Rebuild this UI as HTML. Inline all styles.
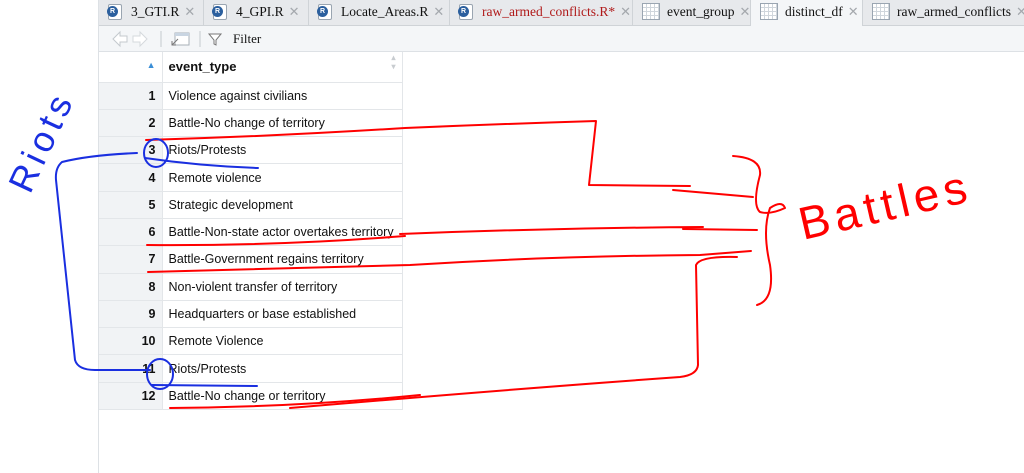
<!DOCTYPE html>
<html><head><meta charset="utf-8"><style>
*{margin:0;padding:0;box-sizing:border-box}
body{width:1024px;height:473px;overflow:hidden;background:#fff;position:relative;font-family:"Liberation Sans",sans-serif}
.pane{position:absolute;left:98px;top:0;width:926px;height:473px;background:#fff;border-left:1px solid #dde1e5}
.tabs{position:absolute;left:0;top:0;width:926px;height:26px;background:#e7e9ec;border-bottom:1px solid #cfd3d7}
.tab{position:absolute;top:0;height:25px;border-right:1px solid #cfd3d7;font-family:"Liberation Serif",serif;font-size:13.5px;line-height:24px;color:#111;white-space:nowrap;overflow:hidden}
.tab .ic{position:absolute;left:9px;top:4px;width:14px;height:16px;background:#fff;border:1px solid #9aa5b1;border-radius:2px}
.tab .r{position:absolute;left:-2px;top:1px;width:11px;height:11px;border-radius:50%;background:#2b5f9e;color:#fff;font-size:7px;line-height:11px;text-align:center;font-family:"Liberation Sans";font-weight:bold}
.tab .g{position:absolute;left:9px;top:3px;width:18px;height:17px;border:1px solid #9aa5b1;background:repeating-linear-gradient(0deg,#fff 0 3px,#d0d6dc 3px 4px),#fff}
.tab .g:after{content:"";position:absolute;inset:0;background:repeating-linear-gradient(90deg,transparent 0 3px,#d0d6dc 3px 4px)}
.tab .x{color:#a4a8ad;font-family:"Liberation Sans";font-size:13px;margin-left:5px}
.tb{position:absolute;left:0;top:26px;width:926px;height:26px;background:#f4f6f8;border-bottom:1px solid #dde1e5}
table{position:absolute;left:0;top:52px;border-collapse:collapse;font-size:12.5px;color:#111}
td{height:27.3px;border-bottom:1px solid #e3e6e9;border-right:1px solid #e3e6e9;padding:0 6px}
td.n{width:63px;text-align:right;font-weight:bold;background:#f1f3f5;padding-right:6px}
td.v{width:240px}
tr.h td{height:30px;font-weight:bold;font-size:13px;background:#fff}
tr.h td.n{background:#fff}
</style></head><body>
<div class="pane">
<div class="tabs">
 <div class="tab" style="left:0;width:105px;padding-left:32px"><span class="ic"><span class="r">R</span></span>3_GTI.R<span class="x">✕</span></div>
 <div class="tab" style="left:105px;width:105px;padding-left:32px"><span class="ic"><span class="r">R</span></span>4_GPI.R<span class="x">✕</span></div>
 <div class="tab" style="left:210px;width:141px;padding-left:32px"><span class="ic"><span class="r">R</span></span>Locate_Areas.R<span class="x">✕</span></div>
 <div class="tab" style="left:351px;width:183px;padding-left:32px;color:#b01a1a"><span class="ic"><span class="r">R</span></span>raw_armed_conflicts.R*<span class="x">✕</span></div>
 <div class="tab" style="left:534px;width:118px;padding-left:34px"><span class="g"></span>event_group<span class="x">✕</span></div>
 <div class="tab" style="left:652px;width:112px;padding-left:34px;background:#f4f6f8;height:26px"><span class="g"></span>distinct_df<span class="x">✕</span></div>
 <div class="tab" style="left:764px;width:162px;padding-left:34px;border-right:none"><span class="g"></span>raw_armed_conflicts<span class="x">✕</span></div>
</div>
<div class="tb">
 <svg width="300" height="26" style="position:absolute;left:0;top:0">
  <path d="M14 13 l7-7 v4 h7 v6 h-7 v4z" fill="#fff" stroke="#c4c9ce"/>
  <path d="M48 13 l-7-7 v4 h-7 v6 h7 v4z" fill="#fff" stroke="#d5d9dd"/>
  <line x1="62" y1="5" x2="62" y2="21" stroke="#c4c9ce"/>
  <rect x="76" y="7" width="14" height="12" fill="#fff" stroke="#a9b0b7"/><rect x="76" y="7" width="14" height="3" fill="#c9d5e2"/>
  <path d="M73 19 l6-6 M73 15 v4 h4" stroke="#777" fill="none"/>
  <line x1="101" y1="5" x2="101" y2="21" stroke="#c4c9ce"/>
  <path d="M110 8 h12 l-5 6 v5 l-2 -1 v-4z" fill="#fff" stroke="#777"/>
  <text x="134" y="17" font-family="Liberation Serif" font-size="13" fill="#111">Filter</text>
 </svg>
</div>
<table>
<tr class="h"><td class="n" style="vertical-align:top;padding-top:4px"><span style="color:#3a8ed6;font-size:9px">▲</span></td><td class="v">event_type<span style="float:right;color:#c8ccd0;font-size:8px;line-height:9px;margin-top:-6px">▴<br>▾</span></td></tr>
<tr><td class="n">1</td><td class="v">Violence against civilians</td></tr>
<tr><td class="n">2</td><td class="v">Battle-No change of territory</td></tr>
<tr><td class="n">3</td><td class="v">Riots/Protests</td></tr>
<tr><td class="n">4</td><td class="v">Remote violence</td></tr>
<tr><td class="n">5</td><td class="v">Strategic development</td></tr>
<tr><td class="n">6</td><td class="v">Battle-Non-state actor overtakes territory</td></tr>
<tr><td class="n">7</td><td class="v">Battle-Government regains territory</td></tr>
<tr><td class="n">8</td><td class="v">Non-violent transfer of territory</td></tr>
<tr><td class="n">9</td><td class="v">Headquarters or base established</td></tr>
<tr><td class="n">10</td><td class="v">Remote Violence</td></tr>
<tr><td class="n">11</td><td class="v">Riots/Protests</td></tr>
<tr><td class="n">12</td><td class="v">Battle-No change or territory</td></tr>
</table>
</div>
<svg width="1024" height="473" style="position:absolute;left:0;top:0" fill="none" stroke-linecap="round" stroke-linejoin="round">
 <g stroke="#f00" stroke-width="2">
  <path d="M146 140 Q280 136 405 128 Q500 124 596 121 L589 185 L690 186"/>
  <path d="M673 190 L753 197"/>
  <path d="M733 156 Q762 158 760 175 Q752 205 760 212 Q770 215 785 208 Q782 200 770 208 Q762 230 770 265 Q775 300 757 305"/>
  <path d="M147 245 Q280 246 405 236 M400 234 Q550 228 703 227 M683 229 L757 230"/>
  <path d="M148 272 Q300 268 410 265 Q550 256 700 255 L751 251"/>
  <path d="M737 257 Q700 256 696 265 L698 365 Q697 375 680 377 Q500 390 290 408"/>
  <path d="M170 408 Q300 407 420 395"/>
 </g>
 <text x="0" y="0" transform="translate(803,240) rotate(-13)" font-family="Liberation Sans" font-size="46" fill="#f00" letter-spacing="5">Battles</text>
 <g stroke="#1a2fe0" stroke-width="2">
  <ellipse cx="156" cy="153" rx="12" ry="14"/>
  <path d="M137 153 Q90 155 62 162 Q55 168 56 180 L75 360 Q78 370 95 370 L150 370"/>
  <path d="M145 158 Q200 166 258 168"/>
  <ellipse cx="160" cy="374" rx="13" ry="15"/>
  <path d="M152 385 L257 386"/>
 </g>
 <text x="0" y="0" transform="translate(30,195) rotate(-65)" font-family="Liberation Sans" font-size="36" fill="#1a2fe0" letter-spacing="5">Riots</text>
</svg>
</body></html>
